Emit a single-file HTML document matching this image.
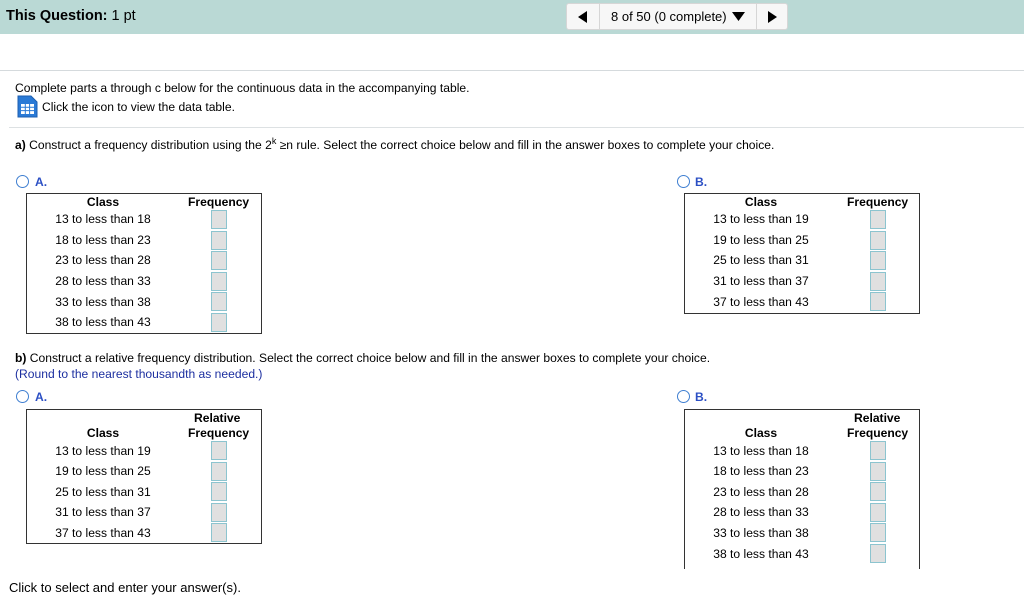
<!DOCTYPE html>
<html><head><style>
*{margin:0;padding:0;box-sizing:border-box}
body{width:1024px;height:596px;background:#fff;font-family:"Liberation Sans",Arial,sans-serif;font-size:12.1px;color:#000;position:relative;overflow:hidden}
.a{position:absolute;white-space:nowrap}
.hdr{position:absolute;left:0;top:0;width:1024px;height:34px;background:#bad9d5}
.nav{position:absolute;top:3px;height:27px;background:#f7f7f7;border:1px solid #d6d6d6;border-radius:3px}
.tbl{position:absolute;border:1px solid #333}
.tbl .c{position:absolute;width:152px;text-align:center}
.tbl .h{font-weight:bold}
.box{position:absolute;width:16px;height:19px;background:#e0e0e0;border:1px solid #8cc4cf}
.radio{position:absolute;width:13px;height:13px;border:1.5px solid #3f7fd1;border-radius:50%}
.lbl{position:absolute;color:#2b4fc4;font-weight:bold}
</style></head><body>
<div class="hdr"></div>
<div class="a" style="left:6px;top:8px;font-size:14.5px"><b>This Question:</b> 1 pt</div>
<div class="nav" style="left:566px;width:222px"></div>
<div class="a" style="left:599px;top:3px;width:1px;height:27px;background:#d6d6d6"></div>
<div class="a" style="left:756px;top:3px;width:1px;height:27px;background:#d6d6d6"></div>
<svg class="a" style="left:578px;top:11px" width="9" height="12"><path d="M9 0V12L0 6Z" fill="#000"/></svg>
<div class="a" style="left:611px;top:9px;font-size:13px">8 of 50 (0 complete)</div>
<svg class="a" style="left:732px;top:12px" width="13" height="9"><path d="M0 0H13L6.5 9Z" fill="#000"/></svg>
<svg class="a" style="left:768px;top:11px" width="9" height="12"><path d="M0 0V12L9 6Z" fill="#000"/></svg>

<div class="a" style="left:0;top:70px;width:1024px;height:1px;background:#d5dadd"></div>
<div class="a" style="left:15px;top:81px">Complete parts a through c below for the continuous data in the accompanying table.</div>
<svg class="a" style="left:16px;top:95px" width="22" height="24"><path d="M2 1H15L21 7V22H2Z" fill="#2a7ad6" stroke="#1d5fb0"/><rect x="5" y="9" width="13" height="10" fill="#fff"/><path d="M5 12.3H18M5 15.6H18M9.3 9V19M13.6 9V19" stroke="#2a7ad6" stroke-width="1"/></svg>
<div class="a" style="left:42px;top:100px">Click the icon to view the data table.</div>
<div class="a" style="left:9px;top:127px;width:1015px;height:1px;background:#dde1e3"></div>
<div class="a" style="left:15px;top:138px;line-height:14px"><b>a)</b> Construct a frequency distribution using the 2<span style="font-size:9px;position:relative;top:-5px">k</span> ≥n rule. Select the correct choice below and fill in the answer boxes to complete your choice.</div>

<div class="radio" style="left:16px;top:175px"></div><div class="lbl" style="left:35px;top:175px">A.</div>
<div class="radio" style="left:677px;top:175px"></div><div class="lbl" style="left:695px;top:175px">B.</div>

<div class="tbl" style="left:26px;top:193px;width:236px;height:141px">
<div class="c h" style="left:0px;top:1px">Class</div><div class="a h" style="left:161px;top:1px">Frequency</div>
<div class="c" style="left:0px;top:18px">13 to less than 18</div><div class="box" style="left:184px;top:16px"></div>
<div class="c" style="left:0px;top:39px">18 to less than 23</div><div class="box" style="left:184px;top:37px"></div>
<div class="c" style="left:0px;top:59px">23 to less than 28</div><div class="box" style="left:184px;top:57px"></div>
<div class="c" style="left:0px;top:80px">28 to less than 33</div><div class="box" style="left:184px;top:78px"></div>
<div class="c" style="left:0px;top:101px">33 to less than 38</div><div class="box" style="left:184px;top:98px"></div>
<div class="c" style="left:0px;top:121px">38 to less than 43</div><div class="box" style="left:184px;top:119px"></div>
</div>
<div class="tbl" style="left:684px;top:193px;width:236px;height:121px">
<div class="c h" style="left:0px;top:1px">Class</div><div class="a h" style="left:162px;top:1px">Frequency</div>
<div class="c" style="left:0px;top:18px">13 to less than 19</div><div class="box" style="left:185px;top:16px"></div>
<div class="c" style="left:0px;top:39px">19 to less than 25</div><div class="box" style="left:185px;top:37px"></div>
<div class="c" style="left:0px;top:59px">25 to less than 31</div><div class="box" style="left:185px;top:57px"></div>
<div class="c" style="left:0px;top:80px">31 to less than 37</div><div class="box" style="left:185px;top:78px"></div>
<div class="c" style="left:0px;top:101px">37 to less than 43</div><div class="box" style="left:185px;top:98px"></div>
</div>

<div class="a" style="left:15px;top:351px"><b>b)</b> Construct a relative frequency distribution. Select the correct choice below and fill in the answer boxes to complete your choice.</div>
<div class="a" style="left:15px;top:367px;color:#1c2fa0">(Round to the nearest thousandth as needed.)</div>
<div class="radio" style="left:16px;top:390px"></div><div class="lbl" style="left:35px;top:390px">A.</div>
<div class="radio" style="left:677px;top:390px"></div><div class="lbl" style="left:695px;top:390px">B.</div>

<div class="tbl" style="left:26px;top:409px;width:236px;height:135px">
<div class="a h" style="left:167px;top:1px">Relative</div>
<div class="c h" style="left:0px;top:16px">Class</div><div class="a h" style="left:161px;top:16px">Frequency</div>
<div class="c" style="left:0px;top:34px">13 to less than 19</div><div class="box" style="left:184px;top:31px"></div>
<div class="c" style="left:0px;top:54px">19 to less than 25</div><div class="box" style="left:184px;top:52px"></div>
<div class="c" style="left:0px;top:75px">25 to less than 31</div><div class="box" style="left:184px;top:72px"></div>
<div class="c" style="left:0px;top:95px">31 to less than 37</div><div class="box" style="left:184px;top:93px"></div>
<div class="c" style="left:0px;top:116px">37 to less than 43</div><div class="box" style="left:184px;top:113px"></div>
</div>
<div class="tbl" style="left:684px;top:409px;width:236px;height:160px;border-bottom:none">
<div class="a h" style="left:169px;top:1px">Relative</div>
<div class="c h" style="left:0px;top:16px">Class</div><div class="a h" style="left:162px;top:16px">Frequency</div>
<div class="c" style="left:0px;top:34px">13 to less than 18</div><div class="box" style="left:185px;top:31px"></div>
<div class="c" style="left:0px;top:54px">18 to less than 23</div><div class="box" style="left:185px;top:52px"></div>
<div class="c" style="left:0px;top:75px">23 to less than 28</div><div class="box" style="left:185px;top:72px"></div>
<div class="c" style="left:0px;top:95px">28 to less than 33</div><div class="box" style="left:185px;top:93px"></div>
<div class="c" style="left:0px;top:116px">33 to less than 38</div><div class="box" style="left:185px;top:113px"></div>
<div class="c" style="left:0px;top:137px">38 to less than 43</div><div class="box" style="left:185px;top:134px"></div>
</div>
<div class="a" style="left:0;top:569px;width:1024px;height:27px;background:#fff"></div>
<div class="a" style="left:9px;top:580px;font-size:13px">Click to select and enter your answer(s).</div>
</body></html>
